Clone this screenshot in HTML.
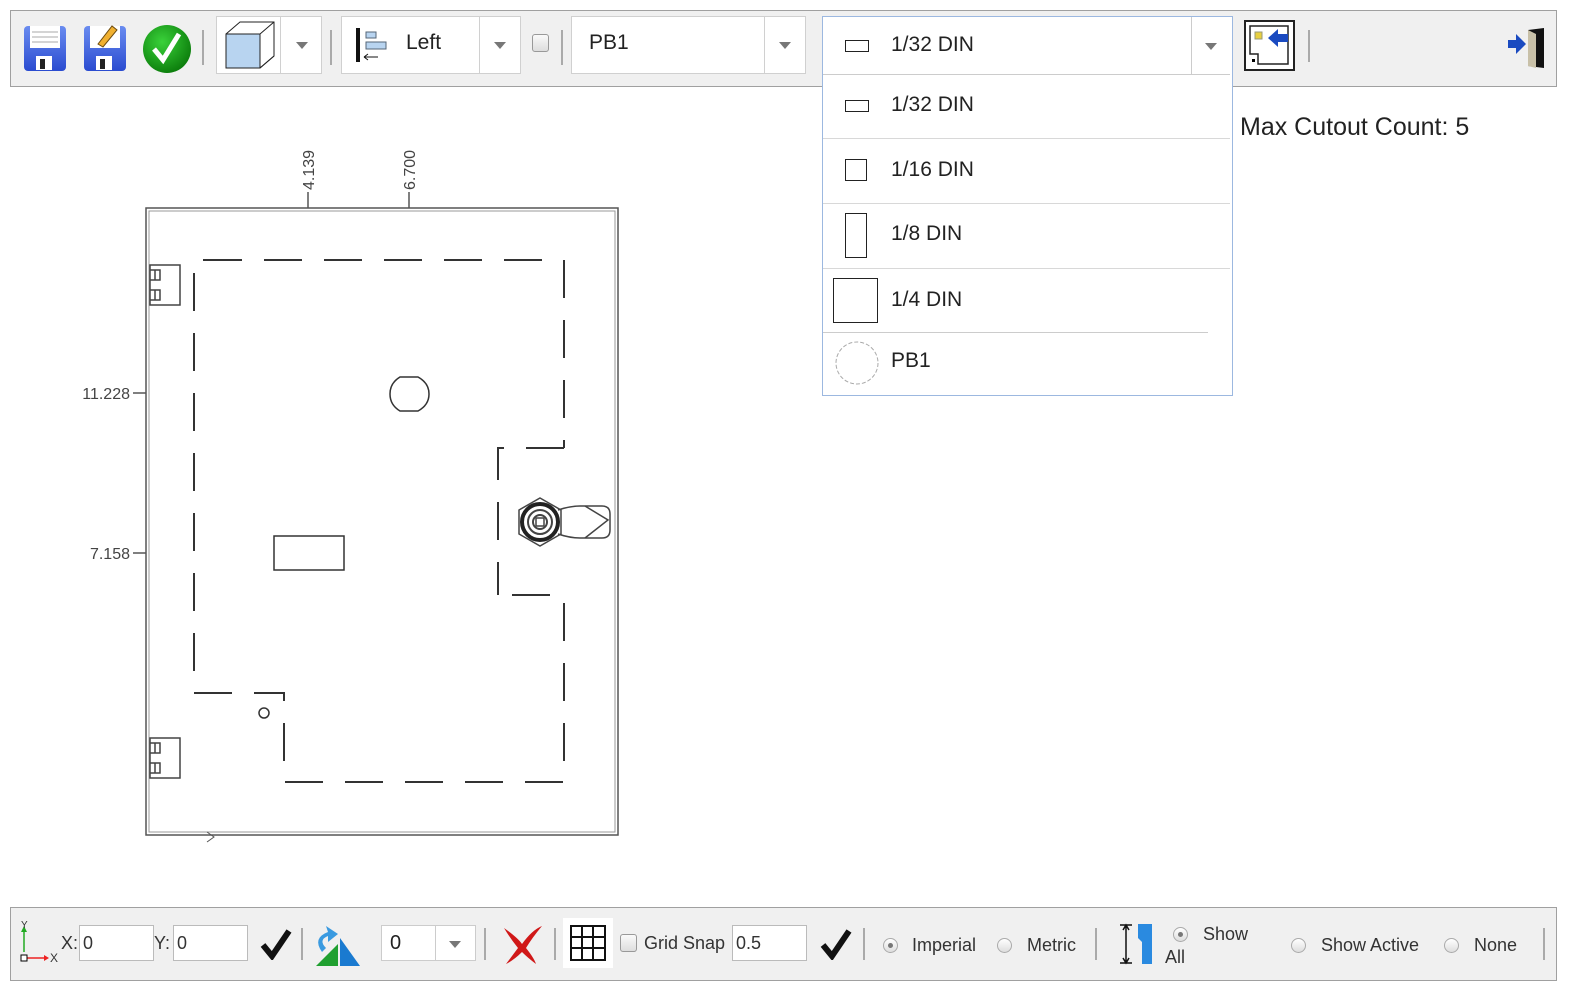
<!DOCTYPE html>
<html><head><meta charset="utf-8"><style>
body{margin:0;width:1584px;height:1002px;background:#fff;position:relative;overflow:hidden;font-family:"Liberation Sans",Arial,sans-serif;}
.a{position:absolute}
.tb{position:absolute;background:#f0f0f0;border:1px solid #a0a0a0;box-sizing:border-box}
.box{position:absolute;background:#fff;border:1px solid #d0d0d0;box-sizing:border-box}
.sep{position:absolute;width:2px;background:#aaa;}
.tri{position:absolute;width:0;height:0;border-left:6px solid transparent;border-right:6px solid transparent;border-top:7px solid #777}
.t{position:absolute;font-size:21px;color:#222;white-space:nowrap}
.s{position:absolute;font-size:18px;color:#333;white-space:nowrap}
.rad{position:absolute;width:15px;height:15px;border-radius:50%;border:1px solid #aaa;background:linear-gradient(#fff,#ddd);box-sizing:border-box}
.dd{position:absolute;left:822px;top:16px;width:411px;height:380px;background:#fff;border:1px solid #9cb8e0;box-sizing:border-box}
.row{position:absolute;left:0;width:407px;border-bottom:1px solid #d8d8d8;background:#fff}
.row span{position:absolute;left:68px;font-size:21px;color:#222}
</style></head><body>

<div class="tb" style="left:10px;top:10px;width:1547px;height:77px"></div>
<svg class="a" style="left:20px;top:20px" width="200" height="56">
 <defs><linearGradient id="fl" x1="0" x2="0" y1="0" y2="1"><stop offset="0" stop-color="#6a8cf0"/><stop offset="1" stop-color="#2a4bd0"/></linearGradient>
 <radialGradient id="gr" cx=".4" cy=".35" r=".7"><stop offset="0" stop-color="#3ad23a"/><stop offset="1" stop-color="#0a7a0a"/></radialGradient></defs>
 <rect x="4" y="6" width="42" height="45" rx="4" fill="url(#fl)"/><rect x="10" y="6" width="30" height="22" fill="#fff"/><line x1="12" y1="12" x2="38" y2="12" stroke="#aaa"/><line x1="12" y1="17" x2="38" y2="17" stroke="#aaa"/><line x1="12" y1="22" x2="38" y2="22" stroke="#aaa"/><rect x="16" y="36" width="16" height="14" fill="#fff"/><rect x="20" y="39" width="5" height="10" fill="#222"/>
 <rect x="64" y="6" width="42" height="45" rx="4" fill="url(#fl)"/><rect x="70" y="6" width="30" height="22" fill="#fff"/><rect x="76" y="36" width="16" height="14" fill="#fff"/><rect x="80" y="39" width="5" height="10" fill="#222"/><path d="M78 24 L92 6 L97 10 L83 27 Z" fill="#f0b030" stroke="#6a4a10"/>
 <circle cx="147" cy="29" r="24" fill="url(#gr)"/><path d="M134 29 L143 40 L159 14" stroke="#fff" stroke-width="5" fill="none"/>
</svg>
<div class="sep" style="left:202px;top:30px;height:35px"></div>
<div class="box" style="left:216px;top:16px;width:106px;height:58px"></div>
<div class="a" style="left:280px;top:17px;width:1px;height:56px;background:#d0d0d0"></div>
<svg class="a" style="left:222px;top:18px" width="56" height="54"><path d="M4 16 L18 4 L52 4 L52 38 L38 50 L4 50 Z" fill="none" stroke="#222"/><rect x="4" y="16" width="34" height="34" fill="#b8d4f0" stroke="#222"/><path d="M38 16 L52 4 M38 50 L52 38" stroke="#222"/></svg>
<div class="tri" style="left:296px;top:42px"></div>
<div class="sep" style="left:330px;top:30px;height:35px"></div>
<div class="box" style="left:341px;top:16px;width:180px;height:58px"></div>
<div class="a" style="left:479px;top:17px;width:1px;height:56px;background:#d0d0d0"></div>
<svg class="a" style="left:352px;top:26px" width="40" height="40"><rect x="4" y="2" width="4" height="34" fill="#111"/><rect x="14" y="6" width="10" height="6" fill="#b8d4f0" stroke="#567"/><rect x="14" y="16" width="20" height="7" fill="#b8d4f0" stroke="#567"/><path d="M12 31 L26 31 M12 31 L16 28 M12 31 L16 34" stroke="#111" fill="none"/></svg>
<div class="t" style="left:406px;top:31px">Left</div>
<div class="tri" style="left:494px;top:42px"></div>
<div class="a" style="left:532px;top:34px;width:17px;height:18px;border:1px solid #999;border-radius:3px;background:linear-gradient(#fafafa,#ddd);box-sizing:border-box"></div>
<div class="sep" style="left:561px;top:30px;height:35px"></div>
<div class="box" style="left:571px;top:16px;width:235px;height:58px"></div>
<div class="a" style="left:764px;top:17px;width:1px;height:56px;background:#d0d0d0"></div>
<div class="t" style="left:589px;top:31px">PB1</div>
<div class="tri" style="left:779px;top:42px"></div>

<svg class="a" style="left:1244px;top:20px" width="52" height="52"><rect x="1" y="1" width="49" height="49" fill="#fff" stroke="#222" stroke-width="2"/><path d="M6 6 L44 6 L44 44 L14 44 L14 34 L6 34 Z" fill="none" stroke="#222" stroke-width="1.5"/><rect x="11" y="12" width="7" height="7" fill="#e8d040" stroke="#997"/><path d="M24 18 L34 9 L34 14 L44 14 L44 22 L34 22 L34 27 Z" fill="#1a4ac0"/><rect x="8" y="39" width="3" height="3" fill="#000"/></svg>
<div class="sep" style="left:1308px;top:30px;height:32px"></div>
<svg class="a" style="left:1506px;top:26px" width="44" height="44"><path d="M22 4 L38 2 L38 42 L22 40 Z" fill="#111"/><path d="M22 4 L30 8 L30 42 L22 40 Z" fill="#c8c0a8"/><path d="M2 14 L10 14 L10 8 L20 18 L10 28 L10 22 L2 22 Z" fill="#1a4ac0"/></svg>

<div class="dd">
 <div class="row" style="top:0;height:57px;border-bottom:1px solid #ccc"><div class="a" style="left:22px;top:23px;width:22px;height:10px;border:1.5px solid #222"></div><span style="top:16px">1/32 DIN</span><div class="a" style="left:368px;top:0;width:1px;height:57px;background:#ccc"></div><div class="tri" style="left:382px;top:26px"></div></div>
 <div class="row" style="top:58px;height:63px"><div class="a" style="left:22px;top:25px;width:22px;height:10px;border:1.5px solid #222"></div><span style="top:18px">1/32 DIN</span></div>
 <div class="row" style="top:122px;height:64px"><div class="a" style="left:22px;top:20px;width:22px;height:22px;border:1.5px solid #222;box-sizing:border-box"></div><span style="top:19px">1/16 DIN</span></div>
 <div class="row" style="top:187px;height:64px"><div class="a" style="left:22px;top:9px;width:22px;height:45px;border:1.5px solid #222;box-sizing:border-box"></div><span style="top:18px">1/8 DIN</span></div>
 <div class="row" style="top:252px;height:63px;border-bottom:1px solid #ccc;width:385px"><div class="a" style="left:10px;top:9px;width:45px;height:45px;border:1.5px solid #222;box-sizing:border-box"></div><span style="top:19px">1/4 DIN</span></div>
 <div class="row" style="top:316px;height:62px;border-bottom:none"><svg class="a" style="left:10px;top:6px" width="48" height="48"><circle cx="24" cy="24" r="21" fill="none" stroke="#aaa" stroke-dasharray="4 2"/></svg><span style="top:16px">PB1</span></div>
</div>
<div class="t" style="left:1240px;top:113px;font-size:25px">Max Cutout Count: 5</div>

<svg class="a" style="left:0;top:100px" width="800" height="760" font-family="Liberation Sans, sans-serif">
 <g stroke="#555" fill="none" stroke-width="1.5">
  <rect x="146" y="108" width="472" height="627"/>
  <rect x="149" y="111" width="466" height="621" stroke="#999" stroke-width="1"/>
  <line x1="308" y1="92" x2="308" y2="108"/><line x1="409" y1="92" x2="409" y2="108"/>
  <line x1="133" y1="293" x2="146" y2="293"/><line x1="133" y1="453" x2="146" y2="453"/>
 </g>
 <g fill="none" stroke="#444" stroke-width="1.5">
  <rect x="150" y="165" width="30" height="40"/><path d="M150 170h10v10h-10 M150 190h10v10h-10 M155 170v10 M155 190v10"/>
  <rect x="150" y="638" width="30" height="40"/><path d="M150 643h10v10h-10 M150 663h10v10h-10 M155 643v10 M155 663v10"/>
 </g>
 <g fill="none" stroke="#333" stroke-width="2" stroke-dasharray="38 22">
  <path d="M204 160 L564 160 L564 348"/>
  <path d="M564 348 L498 348 L498 495"/>
  <path d="M512 495 L564 495 L564 682 L284 682 L284 593 L194 593 L194 160 L204 160"/>
 </g>
 <path d="M400 277 L418 277 Q429 283 429 294 Q429 305 418 311 L400 311 Q390 305 390 294 Q390 283 400 277Z" fill="none" stroke="#333" stroke-width="1.5"/>
 <rect x="274" y="436" width="70" height="34" fill="none" stroke="#333" stroke-width="1.5"/>
 <circle cx="264" cy="613" r="5" fill="none" stroke="#333" stroke-width="1.5"/>
 <g fill="none" stroke="#444" stroke-width="1.5">
  <path d="M540 398 L561 410 L561 434 L540 446 L519 434 L519 410 Z"/>
  <circle cx="540" cy="422" r="18" stroke-width="4" stroke="#222"/>
  <circle cx="540" cy="422" r="12" stroke-width="2"/><circle cx="540" cy="422" r="7" stroke-width="2"/><rect x="536" y="418" width="8" height="8"/>
  <path d="M558 410 Q570 406 580 406 L602 406 Q610 406 610 414 L610 430 Q610 438 602 438 L580 438 Q570 438 558 434"/>
  <path d="M585 406 L608 420 L585 438"/>
 </g>
 <text x="314" y="90" font-size="16" fill="#444" transform="rotate(-90 314 90)">4.139</text>
 <text x="415" y="90" font-size="16" fill="#444" transform="rotate(-90 415 90)">6.700</text>
 <text x="130" y="299" font-size="16" fill="#444" text-anchor="end">11.228</text>
 <text x="130" y="459" font-size="16" fill="#444" text-anchor="end">7.158</text>
 <path d="M207 732 L214 737 L207 742" stroke="#555" fill="none"/>
</svg>

<div class="tb" style="left:10px;top:907px;width:1547px;height:74px"></div>
<svg class="a" style="left:14px;top:920px" width="50" height="46"><path d="M10 32 L10 8" stroke="#2a2" stroke-width="1.5"/><path d="M7 12 L10 6 L13 12Z" fill="#2a2"/><path d="M10 38 L32 38" stroke="#e22" stroke-width="1.5"/><path d="M30 35 L35 38 L30 41Z" fill="#e22"/><rect x="7" y="35" width="6" height="6" fill="#fff" stroke="#000"/><text x="7" y="8" font-size="10" fill="#333">Y</text><text x="36" y="42" font-size="12" fill="#333">X</text></svg>
<div class="s" style="left:61px;top:933px">X:</div>
<div class="box" style="left:79px;top:925px;width:75px;height:36px;border-color:#bbb"></div><div class="s" style="left:83px;top:933px">0</div>
<div class="s" style="left:154px;top:933px">Y:</div>
<div class="box" style="left:173px;top:925px;width:75px;height:36px;border-color:#bbb"></div><div class="s" style="left:177px;top:933px">0</div>
<svg class="a" style="left:260px;top:928px" width="32" height="32"><path d="M3 17 L12 28 L29 3" stroke="#111" stroke-width="6" fill="none"/></svg>
<div class="sep" style="left:301px;top:928px;height:32px"></div>
<svg class="a" style="left:312px;top:922px" width="50" height="46"><path d="M28 44 L28 16 L48 44Z" fill="#1a7ad0"/><path d="M4 44 L26 22 L26 44Z" fill="#20a030"/><path d="M10 30 Q0 16 16 10 L14 4 L26 12 L16 20 L16 14 Q6 18 14 26Z" fill="#3a9ae0"/></svg>
<div class="box" style="left:381px;top:925px;width:95px;height:36px;border-color:#ccc"></div>
<div class="a" style="left:435px;top:926px;width:1px;height:34px;background:#ccc"></div>
<div class="s" style="left:390px;top:932px;font-size:20px;color:#222">0</div>
<div class="tri" style="left:449px;top:941px"></div>
<div class="sep" style="left:484px;top:928px;height:32px"></div>
<svg class="a" style="left:498px;top:922px" width="48" height="44"><path d="M6 6 Q20 16 24 22 Q34 8 44 4 Q34 16 28 26 Q36 36 38 42 Q30 36 24 30 Q16 38 8 42 Q14 34 20 26 Q12 16 6 6Z" fill="#d01818"/></svg>
<div class="sep" style="left:554px;top:928px;height:32px"></div>
<div class="a" style="left:563px;top:918px;width:50px;height:50px;background:#fff"></div>
<svg class="a" style="left:570px;top:925px" width="36" height="36"><g stroke="#111" stroke-width="2" fill="none"><rect x="1" y="1" width="34" height="34"/><path d="M12 1v34M23 1v34M1 12h34M1 23h34"/></g></svg>
<div class="a" style="left:620px;top:934px;width:17px;height:18px;border:1px solid #999;border-radius:3px;background:linear-gradient(#fafafa,#ddd);box-sizing:border-box"></div>
<div class="s" style="left:644px;top:933px">Grid Snap</div>
<div class="box" style="left:732px;top:925px;width:75px;height:36px;border-color:#bbb"></div><div class="s" style="left:736px;top:933px">0.5</div>
<svg class="a" style="left:820px;top:928px" width="32" height="32"><path d="M3 17 L12 28 L29 3" stroke="#111" stroke-width="6" fill="none"/></svg>
<div class="sep" style="left:863px;top:928px;height:32px"></div>
<div class="rad" style="left:883px;top:938px"></div><div class="a" style="left:888px;top:943px;width:5px;height:5px;border-radius:50%;background:#777"></div>
<div class="s" style="left:912px;top:935px">Imperial</div>
<div class="rad" style="left:997px;top:938px"></div>
<div class="s" style="left:1027px;top:935px">Metric</div>
<div class="sep" style="left:1095px;top:928px;height:32px"></div>
<svg class="a" style="left:1114px;top:922px" width="44" height="44"><path d="M6 3h12M6 41h12M12 3v38M9 8l3-5 3 5M9 36l3 5 3-5" stroke="#111" fill="none" stroke-width="1.5"/><path d="M24 2 L38 2 L38 42 L28 42 L28 20 L24 16Z" fill="#2a8ae0"/></svg>
<div class="rad" style="left:1173px;top:927px"></div><div class="a" style="left:1178px;top:932px;width:5px;height:5px;border-radius:50%;background:#777"></div>
<div class="s" style="left:1203px;top:924px">Show</div>
<div class="s" style="left:1165px;top:947px">All</div>
<div class="rad" style="left:1291px;top:938px"></div>
<div class="s" style="left:1321px;top:935px">Show Active</div>
<div class="rad" style="left:1444px;top:938px"></div>
<div class="s" style="left:1474px;top:935px">None</div>
<div class="sep" style="left:1543px;top:928px;height:32px"></div>
</body></html>
